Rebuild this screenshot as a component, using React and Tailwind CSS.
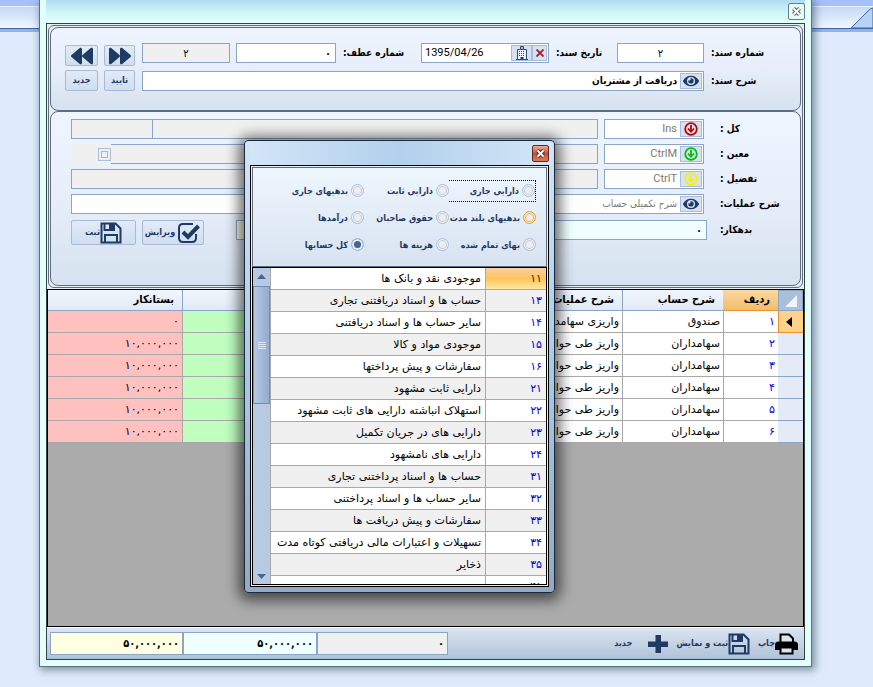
import React from "react";
import { FaEye, FaBackward, FaForward } from "react-icons/fa";

const fieldBase = "h-5 min-w-0 border border-[#8ba5c6] px-1 text-[11px] leading-4 text-black outline-none";
const gray = fieldBase + " bg-[#f0f0f0]";
const white = fieldBase + " bg-white";

function SaveIcon() {
  return (
    <svg viewBox="0 0 22 22" className="size-[22px] shrink-0" fill="none" stroke="#1f3a63" strokeWidth="2">
      <path d="M1.5 1.5h14l5 5v14h-19z" />
      <path d="M5 20v-7h12v7" />
      <path d="M4.500 2v6h9.500v-6" />
      <path d="M9 2h4v5h-4z" fill="#1f3a63" stroke="none" />
    </svg>
  );
}

function CheckIcon() {
  return (
    <svg viewBox="0 0 24 22" className="h-[22px] w-6 shrink-0" fill="none" stroke="#1f3a63">
      <path d="M19 12v4q0 4-4 4H6q-4 0-4-4V6q0-4 4-4h10" strokeWidth="2" />
      <path d="M6 10l5 5L21.500 4" strokeWidth="4" />
    </svg>
  );
}

function PlusIcon() {
  return (
    <svg viewBox="0 0 20 20" className="size-5 shrink-0" fill="#1f3a63">
      <path d="M7.500 1h5.500v6.500H20v5.500h-7V19H7.500v-6H0V7.500h7.500z" />
    </svg>
  );
}

function PrintIcon() {
  return (
    <svg viewBox="0 0 23 22" className="h-[22px] w-[23px] shrink-0">
      <path d="M5.500 10V1.500H14L18 5.500V10" fill="#dbe5f2" stroke="#000" strokeWidth="2" />
      <path d="M0 17v-5q0-3.500 3.500-3.500h16q3.500 0 3.500 3.500v5z" />
      <path d="M5.500 14.500h12V20.500h-12z" fill="#dbe5f2" stroke="#000" strokeWidth="2" />
    </svg>
  );
}

function BuildingIcon() {
  return (
    <svg viewBox="0 0 12 14" className="h-[14px] w-3" fill="none" stroke="#2b4d7c">
      <path d="M1.500 3.500h9v10h-9z" fill="#eef4fb" />
      <path d="M4.500 .500h3v3h-3z" fill="#aab6e6" stroke="#3c3c9c" />
      <path d="M3 5.500h6M3 7.500h6M3 9.500h6" strokeDasharray="1 1" />
      <path d="M4.500 11h3v3h-3z" fill="#1f3a63" stroke="none" />
      <path d="M0 13.500h12" />
    </svg>
  );
}

function DownCircle({ color }) {
  return (
    <svg viewBox="0 0 14 14" className="size-[14px]" fill="none" stroke={color}>
      <circle cx="7" cy="7" r="5.800" strokeWidth="1.800" />
      <path d="M7 3v6" strokeWidth="1.800" />
      <path d="M4 6.500L7 9.800l3-3.300" strokeWidth="1.600" />
    </svg>
  );
}

function CrossIcon({ dark }) {
  return (
    <svg viewBox="0 0 9 9" className="size-[9px] shrink-0" fill="none">
      <path d="M1.500 1.500l6 6M7.500 1.500l-6 6" stroke={dark} strokeWidth="4" />
      <path d="M1.500 1.500l6 6M7.500 1.500l-6 6" stroke="#fff" strokeWidth="1.800" />
    </svg>
  );
}

function FieldWithButton({ className, label, icon, ...rest }) {
  return (
    <div className={"flex h-5 min-w-0 items-center border border-[#8ba5c6] bg-white pr-px " + className}>
      <input aria-label={label} dir="auto" className="h-4 w-full min-w-0 flex-1 bg-transparent pr-[3px] text-right leading-4 outline-none placeholder:text-[#7a7a7a]" {...rest} />
      <button aria-label={label} className="flex h-4 w-[22px] shrink-0 items-center justify-center border border-[#a9bcda] bg-[#d6e2f1]">
        {icon}
      </button>
    </div>
  );
}

const smallButton = "flex items-center justify-center overflow-hidden rounded-xs border border-[#a9b9d6] bg-linear-to-b from-[#e2ebf8] to-[#cfdeee] text-[9px] font-bold text-[#1f3a63]";
const topLabel = "shrink-0 pl-[7px] text-left text-[10px] leading-5 font-bold text-black";
const sideLabel = "w-[96px] shrink-0 pl-4 text-left text-[10px] leading-5 font-bold text-black";
const panel = "rounded-lg border border-[#5f6f80] bg-linear-to-b from-[#eef5fe] via-[#e7eefa] to-[#d6e2ef]";

function HeaderPanel() {
  return (
    <section className={panel + " flex h-[84px] gap-[7px] pt-[15px] pl-[14px]"}>
      <div className="grid h-12 grid-cols-[33px_31px] grid-rows-2 gap-x-[6px] gap-y-1 pt-0.5">
        <button className={smallButton} aria-label="قبلی"><FaBackward className="size-[22px]" /></button>
        <button className={smallButton} aria-label="بعدی"><FaForward className="size-[22px]" /></button>
        <button className={smallButton}>جدید</button>
        <button className={smallButton}>تایید</button>
      </div>
      <div className="flex min-w-0 flex-1 flex-col gap-2">
        <div className="flex">
          <input aria-label="شماره" dir="rtl" className={gray + " w-0 flex-1 text-center"} defaultValue="۲" />
          <input id="ref" dir="rtl" className={white + " ml-[6px] w-[100px] text-right font-bold"} defaultValue="۰" />
          <label htmlFor="ref" dir="rtl" className={topLabel + " w-[85px]"}>شماره عطف:</label>
          <div className="flex h-5 w-32 items-center border border-[#8ba5c6] bg-white pr-px">
            <input id="date" className="w-0 flex-1 pl-[3px] font-[Roboto,'Liberation_Sans',sans-serif] text-[11px] leading-4 text-black outline-none" defaultValue="1395/04/26" />
            <button aria-label="تقویم" className="flex h-4 w-[21px] items-center justify-center border border-[#a9bcda] bg-[#d6e2f1]"><BuildingIcon /></button>
            <button aria-label="حذف" className="flex h-4 w-[15px] items-center justify-center border border-[#a9bcda] bg-[#d6e2f1]">
              <svg viewBox="0 0 8 8" className="size-2" stroke="#a01c20" strokeWidth="1.800"><path d="M.500 .500l7 7M7.500 .500l-7 7" /></svg>
            </button>
          </div>
          <label htmlFor="date" dir="rtl" className={topLabel + " w-[68px]"}>تاریخ سند:</label>
          <input id="num" dir="rtl" className={white + " w-[87px] text-center"} defaultValue="۲" />
          <label htmlFor="num" dir="rtl" className={topLabel + " w-[96px]"}>شماره سند:</label>
        </div>
        <div className="flex">
          <FieldWithButton id="desc" className="flex-1 text-[10px] font-bold text-black" label="شرح سند" defaultValue="دریافت از مشتریان" icon={<FaEye className="size-4 text-[#1f3a63]" />} />
          <label htmlFor="desc" dir="rtl" className={topLabel + " w-[96px]"}>شرح سند:</label>
        </div>
      </div>
    </section>
  );
}

function AccountPanel() {
  return (
    <section className={panel + " flex h-[175px] flex-col gap-[5px] pt-[7px] pl-5"}>
      <div className="flex">
        <input aria-label="کد" className={gray + " w-[81px] border-r-0"} />
        <input aria-label="نام کل" className={gray + " w-0 flex-1"} />
        <FieldWithButton id="total" className="ml-[6px] w-[100px] font-[Roboto,sans-serif] text-[11px]" label="کل" placeholder="Ins" icon={<DownCircle color="#c00000" />} />
        <label htmlFor="total" dir="rtl" className={sideLabel}>کل :</label>
      </div>
      <div className="flex">
        <div className="flex h-5 w-10 items-center justify-end bg-[#f0f0f0]">
          <input type="checkbox" aria-label="معین" className="size-[13px] appearance-none border border-[#a9c0de] bg-[#f0f0f0] inset-ring inset-ring-[#f0f0f0] outline-1 -outline-offset-4 outline-[#b4b4b4]" />
        </div>
        <input aria-label="نام معین" className={gray + " w-0 flex-1 border-l-0"} />
        <FieldWithButton id="specific" className="ml-[6px] w-[100px] font-[Roboto,sans-serif] text-[11px]" label="معین" placeholder="CtrlM" icon={<DownCircle color="#00c000" />} />
        <label htmlFor="specific" dir="rtl" className={sideLabel}>معین :</label>
      </div>
      <div className="flex">
        <input aria-label="نام تفضیل" className={gray + " w-0 flex-1"} />
        <FieldWithButton id="detail" className="ml-[6px] w-[100px] font-[Roboto,sans-serif] text-[11px]" label="تفضیل" placeholder="CtrlT" icon={<DownCircle color="#f7f000" />} />
        <label htmlFor="detail" dir="rtl" className={sideLabel}>تفضیل :</label>
      </div>
      <div className="flex">
        <FieldWithButton id="operation" className="flex-1 text-[10px]" label="شرح عملیات" placeholder="شرح تکمیلی حساب" icon={<FaEye className="size-4 text-[#1f3a63]" />} />
        <label htmlFor="operation" dir="rtl" className={sideLabel}>شرح عملیات:</label>
      </div>
      <div className="flex items-start pt-px">
        <button className={smallButton + " h-[25px] w-[65px]"}><span>ثبت</span><SaveIcon /></button>
        <button className={smallButton + " ml-[6px] h-[25px] w-[62px] gap-0.5"}><span>ویرایش</span><CheckIcon /></button>
        <input aria-label="بستانکار" className={fieldBase + " ml-8 w-[120px] bg-[#ffffe1]"} />
        <input id="debit" dir="rtl" className={fieldBase + " ml-24 w-0 flex-1 bg-[#f0ffff] text-right font-bold"} defaultValue="۰" />
        <label htmlFor="debit" dir="rtl" className="w-[93px] shrink-0 pl-[13px] text-left text-[10px] leading-5 font-bold text-black">بدهکار:</label>
      </div>
    </section>
  );
}

const entries = [
  ["۱", "صندوق", "واریزی سهامد", "۰"],
  ["۲", "سهامداران", "واریز طی حوال", "۱۰,۰۰۰,۰۰۰"],
  ["۳", "سهامداران", "واریز طی حوال", "۱۰,۰۰۰,۰۰۰"],
  ["۴", "سهامداران", "واریز طی حوال", "۱۰,۰۰۰,۰۰۰"],
  ["۵", "سهامداران", "واریز طی حوال", "۱۰,۰۰۰,۰۰۰"],
  ["۶", "سهامداران", "واریز طی حوال", "۱۰,۰۰۰,۰۰۰"],
];

function EntriesTable() {
  const th = "border-l border-[#8ba5c6] pr-2 text-right text-[11px] font-bold";
  const td = "border-b border-l border-[#a8a8a8] bg-white pr-[3px] text-right font-normal whitespace-nowrap";
  return (
    <div className="min-h-0 flex-1 overflow-hidden border border-black bg-[#ababab]">
      <table dir="rtl" className="w-full table-fixed border-separate border-spacing-0 text-[11px] leading-4 text-black">
        <colgroup>
          <col className="w-[25px]" /><col className="w-[55px]" /><col className="w-[101px]" /><col className="w-[200px]" /><col /><col className="w-[134px]" />
        </colgroup>
        <thead className="font-['DejaVu_Sans_Condensed','DejaVu_Sans',sans-serif]">
          <tr className="h-[21px] bg-linear-to-b from-[#f1f6fd] to-[#dfe9f6]">
            <th aria-label="انتخاب" className="border border-[#8ba5c6] bg-[#a9bfdb]">
              <svg viewBox="0 0 14 14" className="mx-auto size-[14px]"><path d="M13 1v12H1z" fill="#f1f5fb" /></svg>
            </th>
            <th className="border-b border-[#f09030] bg-linear-to-b from-[#fad9a0] to-[#f2bd6a] pr-2 text-right text-[11px] font-bold">ردیف</th>
            <th className={th + " border-b"}>شرح حساب</th>
            <th className={th + " border-b"}>شرح عملیات</th>
            <th aria-label="بدهکار" className={th + " border-b"} />
            <th className="border-b border-[#8ba5c6] pr-2 text-right text-[11px] font-bold">بستانکار</th>
          </tr>
        </thead>
        <tbody className="font-['DejaVu_Sans',sans-serif]">
          {entries.map((r, i) => (
            <tr key={r[0]} className="h-[22px]">
              <td className={i === 0 ? "border-b border-l border-[#f09030] bg-[#ffd28c]" : "border-b border-[#8ba5c6] bg-[#e4ebf7]"}>
                {i === 0 && <svg viewBox="0 0 6 10" className="ml-auto mr-[11px] h-[10px] w-[6px]"><path d="M6 0v10L0 5z" /></svg>}
              </td>
              <td className={td + " text-[#0000f0]"}>{r[0]}</td>
              <td className={td}>{r[1]}</td>
              <td className={td}>{r[2]}</td>
              <td className="border-b border-l border-[#a8a8a8] bg-[#c0ffc0]" />
              <td className="border-b border-[#a8a8a8] bg-[#ffc0c0] pr-[3px] text-right">{r[3]}</td>
            </tr>
          ))}
        </tbody>
      </table>
    </div>
  );
}

function Footer() {
  const total = "h-[23px] border border-[#8ba5c6] px-[3px] text-right text-[11px] font-bold text-black outline-none";
  const action = "flex items-center text-[9px] font-bold text-[#1f3a63]";
  return (
    <footer className="flex h-8 shrink-0 items-center border-t border-white bg-linear-to-b from-[#dbe5f2] to-[#b0c2d8] pr-[6px] pl-[3px]">
      <input aria-label="جمع بستانکار" dir="rtl" className={total + " w-[133px] bg-[#ffffe1]"} defaultValue="۵۰,۰۰۰,۰۰۰" />
      <input aria-label="جمع بدهکار" dir="rtl" className={total + " w-[134px] bg-[#f0ffff]"} defaultValue="۵۰,۰۰۰,۰۰۰" />
      <input aria-label="مانده" dir="rtl" className={total + " w-[131px] bg-[#f0f0f0]"} defaultValue="۰" />
      <div className="ml-auto flex items-center">
        <button className={action + " gap-4"}><span>جدید</span><PlusIcon /></button>
        <button className={action + " ml-2"}><span>ثبت و نمایش</span><SaveIcon /></button>
        <button className={action + " ml-2"}><span>چاپ</span><PrintIcon /></button>
      </div>
    </footer>
  );
}

const kinds = [
  "دارایی جاری", "دارایی ثابت", "بدهیهای جاری",
  "بدهیهای بلند مدت", "حقوق صاحبان", "درآمدها",
  "بهای تمام شده", "هزینه ها", "کل حسابها",
];

const accounts = [
  ["۱۱", "موجودی نقد و بانک ها"],
  ["۱۳", "حساب ها و اسناد دریافتنی تجاری"],
  ["۱۴", "سایر حساب ها و اسناد دریافتنی"],
  ["۱۵", "موجودی مواد و کالا"],
  ["۱۶", "سفارشات و پیش پرداختها"],
  ["۲۱", "دارایی ثابت مشهود"],
  ["۲۲", "استهلاک انباشته دارایی های ثابت مشهود"],
  ["۲۳", "دارایی های در جریان تکمیل"],
  ["۲۴", "دارایی های نامشهود"],
  ["۳۱", "حساب ها و اسناد پرداختنی تجاری"],
  ["۳۲", "سایر حساب ها و اسناد پرداختنی"],
  ["۳۳", "سفارشات و پیش دریافت ها"],
  ["۳۴", "تسهیلات و اعتبارات مالی دریافتی کوتاه مدت"],
  ["۳۵", "ذخایر"],
  ["۴۱", ""],
];

function AccountDialog() {
  return (
    <div role="dialog" aria-label="حسابها" className="absolute top-[140px] left-[244px] flex h-[453px] w-[311px] flex-col rounded-sm border border-[#1c2838] bg-linear-to-b from-[#d3e5f7] via-[#a7cbea] to-[#93a9c4] px-[5px] pb-[5px] shadow-[0_2px_14px_5px_rgba(0,0,0,0.6)]">
      <div className="flex h-6 shrink-0 items-center justify-end bg-linear-to-r from-[#d3e5f7] via-[#b2d0ec] to-[#d3e5f7]">
        <button aria-label="بستن" className="flex h-[17px] w-[17px] items-center justify-center rounded-xs border border-[#5b2a2a] bg-linear-to-b from-[#eaa999] via-[#cf4a2c] to-[#dd7c58]">
          <CrossIcon dark="#4a3a3a" />
        </button>
      </div>
      <div className="flex min-h-0 flex-1 flex-col border border-black bg-[#e8eef6] p-px">
        <fieldset dir="rtl" className="grid h-[100px] shrink-0 grid-cols-[87px_85px_auto] grid-rows-[27px_27px_27px] border border-[#5f6f80] bg-linear-to-b from-[#eef6fd] to-[#d8e3f1] pt-[9px] pr-[10px] pb-[7px] pl-3">
          {kinds.map((k, i) => (
            <label key={k} className={"flex items-center gap-[3px] self-center text-[9px] leading-5 font-bold whitespace-nowrap text-[#1f3a63]" + (i === 0 ? " border border-l-0 border-dotted border-black" : "")}>
              <input
                type="radio"
                name="kind"
                defaultChecked={i === 8}
                className={"size-[13px] shrink-0 appearance-none rounded-full border bg-[#eeeeee] checked:bg-[#3f6797] " + (i === 3 ? "border-[#e0a040] shadow-[inset_0_0_0_1px_#fff2d0,inset_0_0_0_2px_#f0b860]" : i === 8 ? "border-[#a9c0de] shadow-[inset_0_0_0_2px_#e8eef8]" : "border-[#a9c0de] shadow-[inset_0_0_0_1px_#f4f6fb,inset_0_0_0_2px_#c8ccd4]")}
              />
              {k}
            </label>
          ))}
        </fieldset>
        <div className="flex min-h-0 flex-1 overflow-hidden border border-black bg-white">
          <div className="flex w-[17px] shrink-0 flex-col items-center bg-[#b8cae2]">
            <svg viewBox="0 0 17 18" className="h-[18px] w-[17px] shrink-0"><path d="M4 11h9L8.500 6z" fill="#4a6690" /></svg>
            <div className="flex h-[118px] w-full shrink-0 flex-col items-center justify-center gap-px border border-[#6f8db8] bg-linear-to-r from-[#b3c8e2] to-[#93acd0]">
              <i className="h-px w-2 bg-[#dce5f2]" /><i className="h-px w-2 bg-[#dce5f2]" /><i className="h-px w-2 bg-[#dce5f2]" /><i className="h-px w-2 bg-[#dce5f2]" />
            </div>
            <svg viewBox="0 0 17 18" className="mt-auto h-[18px] w-[17px] shrink-0"><path d="M4 8h9l-4.500 5z" fill="#4a6690" /></svg>
          </div>
          <table dir="rtl" className="h-fit w-0 flex-1 table-fixed border-separate border-spacing-0 font-['DejaVu_Sans',sans-serif] text-[11px] leading-4 text-black">
            <colgroup><col className="w-[61px]" /><col /></colgroup>
            <tbody>
              {accounts.map(([code, name], i) => (
                <tr key={code} className={"h-[22px] " + (i % 2 ? "bg-[#f0f0f0]" : "bg-white")}>
                  <td className={"border-b border-l border-[#a8a8a8] pr-1 text-right " + (i === 0 ? "bg-linear-to-b from-[#f9cfa0] via-[#ffc45c] to-[#ffe9a0] text-[#402000]" : "text-[#0000f0]")}>{code}</td>
                  <td className="border-b border-l border-[#a8a8a8] pr-1 text-right whitespace-nowrap">{name}</td>
                </tr>
              ))}
            </tbody>
          </table>
        </div>
      </div>
    </div>
  );
}

export default function App() {
  return (
    <div className="relative h-screen overflow-hidden bg-[#dfebfd] font-['DejaVu_Sans_Condensed','DejaVu_Sans',sans-serif]">
      <div className="flex h-8 flex-col">
        <div className="h-[6px] bg-[#a6c1fa]" />
        <div className="flex flex-1 justify-end border-t border-b border-t-[#e8f0fe] border-b-[#3f66a8] bg-linear-to-b from-[#c5d9f8] to-[#f0f6ff]">
          <svg viewBox="0 0 22 21" className="h-full w-[22px]"><path d="M0 21L17 4q3-3 5-3v20z" fill="#b8d2f6" stroke="#3f66a8" /></svg>
        </div>
        <div className="h-[3px] bg-[#92b3e8]" />
      </div>
      <div className="absolute inset-0 pr-[61px] pb-5 pl-[39px]">
        <main className="flex h-full flex-col border border-t-0 border-[#62706f] bg-[#e2fffc] px-[6px] pb-[6px] shadow-[2px_2px_8px_1px_rgba(40,60,90,0.55)]">
          <div className="flex h-[23px] shrink-0 items-center justify-end bg-linear-to-b from-[#b2dcf4] via-[#cdf3f5] to-[#e2fffc]">
            <button aria-label="بستن پنجره" className="flex size-[17px] items-center justify-center rounded-xs border border-[#66807f] bg-[#e6fbfa]">
              <CrossIcon dark="#5a6464" />
            </button>
          </div>
          <div className="flex min-h-0 flex-1 flex-col border border-[#384040] bg-[#e6eef8]">
            <div className="m-px shrink-0 rounded-md border border-[#5f6f80] p-px">
              <HeaderPanel />
              <AccountPanel />
            </div>
            <EntriesTable />
            <Footer />
          </div>
        </main>
      </div>
      <AccountDialog />
    </div>
  );
}
